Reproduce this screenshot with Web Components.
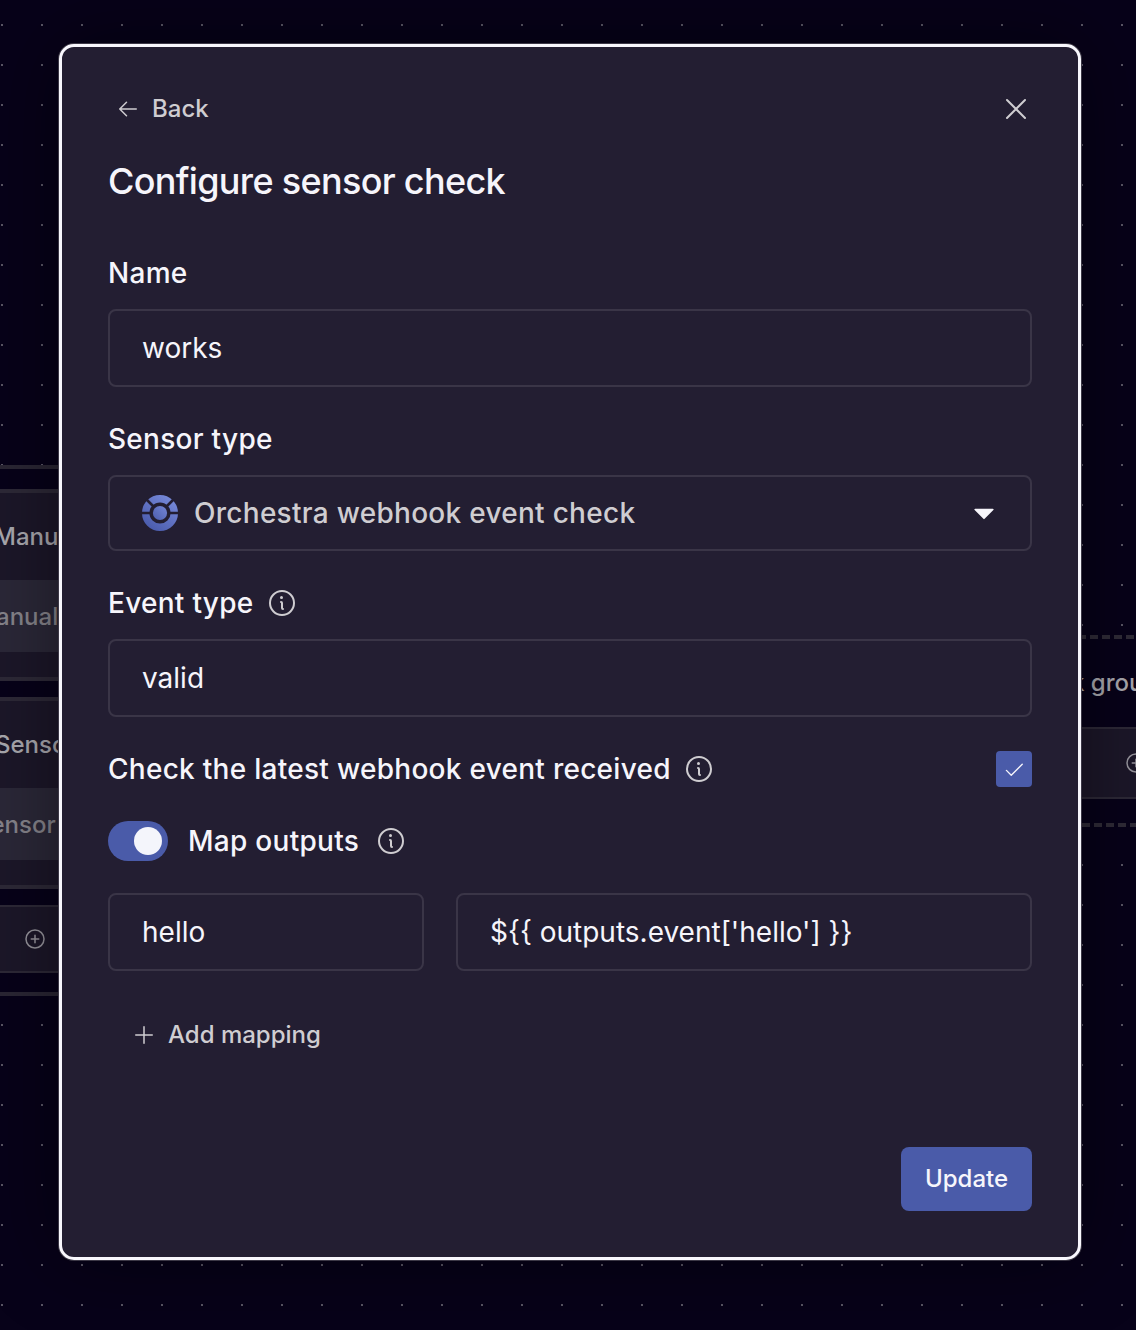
<!DOCTYPE html>
<html lang="en">
<head>
<meta charset="utf-8">
<title>Configure sensor check</title>
<style>
    :root {
        --bg: #070219;
        --panel: #231e32;
        --line: #3a3547;
        --text: #f6f5fb;
        --muted: #cfcdd1;
        --accent: #4a5ba9;
    }
    body {
        margin: 0;
        background: var(--bg);
        color: var(--text);
        font-family: Inter, "Liberation Sans", sans-serif;
    }
</style>
</head>
<body>
<sensor-page></sensor-page>

<script>
const ICONS = {
    back: '<path d="M216 128H40M112 56L40 128L112 200"/>',
    close: '<path d="M200 56L56 200M200 200L56 56"/>',
    plus: '<path d="M40 128H216M128 40V216"/>',
    check: '<path d="M40 144L96 200L224 72"/>',
    caret: '<path fill="currentColor" stroke="none" d="M213.66,101.66l-80,80a8,8,0,0,1-11.32,0l-80-80A8,8,0,0,1,48,88H208A8,8,0,0,1,213.66,101.66Z"/>',
    info: '<circle cx="128" cy="128" r="96"/><path d="M120 120a8 8 0 0 1 8 8v40a8 8 0 0 0 8 8"/><circle cx="124" cy="84" r="12" fill="currentColor" stroke="none"/>',
    pluscircle: '<circle cx="128" cy="128" r="96"/><path d="M88 128H168M128 88V168"/>'
}

function define(name, html) {
    const template = document.createElement('template')
    template.innerHTML = html
    customElements.define(name, class extends HTMLElement {
        constructor() {
            super()
            this.attachShadow({ mode: 'open' })
            this.shadowRoot.appendChild(template.content.cloneNode(true))
        }
    })
}

class UiIcon extends HTMLElement {
    constructor() {
        super()
        this.attachShadow({ mode: 'open' })
    }
    connectedCallback() {
        const size = this.getAttribute('size') || 24
        this.shadowRoot.innerHTML = `
            <style>
                :host { display: block; flex: none; }
                svg { display: block; }
            </style>
            <svg width="${size}" height="${size}" viewBox="0 0 256 256" fill="none" stroke="currentColor"
                stroke-width="16" stroke-linecap="round" stroke-linejoin="round">${ICONS[this.getAttribute('name')]}</svg>
        `
    }
}
customElements.define('ui-icon', UiIcon)

define('orchestra-logo', `
    <style>
        :host { display: block; flex: none; }
        svg { display: block; }
    </style>
    <svg width="36" height="36" viewBox="0 0 36 36">
        <defs>
            <linearGradient id="g" gradientUnits="userSpaceOnUse" x1="28" y1="4" x2="8" y2="32">
                <stop offset="0" stop-color="#7486d6"/>
                <stop offset="1" stop-color="#4c5dae"/>
            </linearGradient>
            <linearGradient id="c" x1="1" y1="0" x2="0" y2="1">
                <stop offset="0" stop-color="#7486d6"/>
                <stop offset="1" stop-color="#4c5dae"/>
            </linearGradient>
        </defs>
        <circle cx="18" cy="18" r="14.3" fill="none" stroke="url(#g)" stroke-width="7.4"/>
        <circle cx="18" cy="18" r="7.1" fill="url(#c)"/>
        <path d="M-1 18H8M28 18H37M11 11L4 4M25 11L32 4" stroke="#231e32" stroke-width="2.6"/>
    </svg>
`)

define('form-field', `
    <style>
        :host { display: flex; flex-direction: column; gap: 18px; }
    </style>
    <slot name="label"></slot>
    <slot></slot>
`)

define('field-label', `
    <style>
        :host {
            display: flex;
            align-items: center;
            gap: var(--gap, 12px);
            height: 36px;
            font-size: 28px;
            font-weight: 500;
            letter-spacing: 0.28px;
            white-space: nowrap;
        }
        ::slotted(ui-icon) { color: var(--muted); }
    </style>
    <slot></slot>
`)

define('text-box', `
    <style>
        :host {
            display: flex;
            align-items: center;
            box-sizing: border-box;
            height: 78px;
            padding: 0 32px;
            border: 2px solid var(--line);
            border-radius: 8px;
            font-size: 28px;
            white-space: nowrap;
        }
    </style>
    <slot></slot>
`)

define('select-box', `
    <style>
        :host {
            display: flex;
            align-items: center;
            gap: 16px;
            box-sizing: border-box;
            height: 76px;
            padding: 0 32px;
            border: 2px solid var(--line);
            border-radius: 8px;
            color: var(--muted);
            font-size: 28px;
            font-weight: 500;
            letter-spacing: 0.28px;
            white-space: nowrap;
        }
        span { flex: 1; }
        ui-icon { color: var(--text); }
    </style>
    <slot name="icon"></slot>
    <span><slot></slot></span>
    <ui-icon name="caret" size="28"></ui-icon>
`)

define('check-box', `
    <style>
        :host {
            display: grid;
            place-items: center;
            width: 36px;
            height: 36px;
            border-radius: 4px;
            background: var(--accent);
        }
    </style>
    <ui-icon name="check" size="22"></ui-icon>
`)

define('toggle-switch', `
    <style>
        :host {
            display: flex;
            align-items: center;
            justify-content: flex-end;
            box-sizing: border-box;
            width: 60px;
            height: 40px;
            padding: 6px;
            border-radius: 20px;
            background: var(--accent);
        }
        i { width: 28px; height: 28px; border-radius: 50%; background: #f4f5fb; }
    </style>
    <i></i>
`)

define('text-button', `
    <style>
        :host {
            display: flex;
            align-items: center;
            gap: 12px;
            color: var(--muted);
            font-size: 24px;
            font-weight: 500;
            white-space: nowrap;
        }
        :host([primary]) {
            justify-content: center;
            width: 131px;
            height: 64px;
            border-radius: 8px;
            background: var(--accent);
            color: var(--text);
        }
        span { padding-bottom: 2px; }
    </style>
    <slot name="icon"></slot>
    <span><slot></slot></span>
`)

define('config-dialog', `
    <style>
        :host {
            display: flex;
            flex-direction: column;
            box-sizing: border-box;
            padding: 42px 46px 46px;
            border: 3px solid #f8f7fd;
            border-radius: 15px;
            background: var(--panel);
            box-shadow: 0 0 0 1px #3c3846, 0 0 80px rgba(0, 0, 0, .45);
        }
        header { display: flex; align-items: center; justify-content: space-between; height: 40px; padding-left: 8px; }
        header ui-icon { color: var(--muted); }
        h1 { margin: 30px 0 52px; font-size: 36px; line-height: 44px; font-weight: 500; letter-spacing: -0.68px; }
        main { display: flex; flex-direction: column; gap: 34px; }
        footer { display: flex; justify-content: flex-end; margin-top: auto; }
    </style>
    <header>
        <text-button><ui-icon slot="icon" name="back"></ui-icon>Back</text-button>
        <ui-icon name="close" size="32"></ui-icon>
    </header>
    <h1><slot name="title"></slot></h1>
    <main><slot></slot></main>
    <footer><slot name="action"></slot></footer>
`)

define('sensor-form', `
    <style>
        :host { display: flex; flex-direction: column; gap: 34px; }
        .row { display: flex; align-items: center; justify-content: space-between; }
        .map { display: flex; align-items: center; gap: 20px; }
        .map field-label { --gap: 16px; }
        .pair { display: grid; grid-template-columns: 316px 1fr; gap: 32px; margin-top: -2px; }
        .add { height: 48px; margin-top: 6px; padding-left: 24px; }
    </style>
    <form-field>
        <field-label slot="label">Name</field-label>
        <text-box>works</text-box>
    </form-field>
    <form-field>
        <field-label slot="label">Sensor type</field-label>
        <select-box><orchestra-logo slot="icon"></orchestra-logo>Orchestra webhook event check</select-box>
    </form-field>
    <form-field>
        <field-label slot="label">Event type<ui-icon name="info" size="32"></ui-icon></field-label>
        <text-box>valid</text-box>
    </form-field>
    <div class="row">
        <field-label>Check the latest webhook event received<ui-icon name="info" size="32"></ui-icon></field-label>
        <check-box></check-box>
    </div>
    <div class="map">
        <toggle-switch></toggle-switch>
        <field-label>Map outputs<ui-icon name="info" size="32"></ui-icon></field-label>
    </div>
    <div class="pair">
        <text-box>hello</text-box>
        <text-box>\${{ outputs.event['hello'] }}</text-box>
    </div>
    <text-button class="add"><ui-icon slot="icon" name="plus"></ui-icon>Add mapping</text-button>
`)

// task card on the canvas: title, then a highlighted row
define('flow-card', `
    <style>
        :host {
            display: block;
            box-sizing: border-box;
            height: 192px;
            border: solid #2d2937;
            border-width: 4px 0;
            background: #1c1729;
            font-size: 24px;
            font-weight: 500;
            white-space: nowrap;
        }
        .title { height: 87px; line-height: 87px; color: #a9a8ae; }
        .row { height: 72px; line-height: 74px; background: #2b2838; color: #86848b; }
        ::slotted(*) { display: block; margin-left: var(--shift, 0); }
    </style>
    <div class="title"><slot name="title"></slot></div>
    <div class="row"><slot></slot></div>
`)

define('flow-add', `
    <style>
        :host {
            display: flex;
            align-items: center;
            box-sizing: border-box;
            border: solid #2d2937;
            border-width: 2px 0;
            background: #1c1729;
            color: #96949c;
        }
    </style>
    <ui-icon name="pluscircle"></ui-icon>
`)

define('flow-canvas', `
    <style>
        :host {
            display: block;
            position: relative;
            overflow: hidden;
            background: url("data:image/svg+xml,%3Csvg xmlns='http://www.w3.org/2000/svg' width='40' height='40'%3E%3Crect x='1' y='24' width='2' height='2' fill='%235a5665'/%3E%3C/svg%3E") var(--bg);
        }
        .left {
            position: absolute;
            left: 0;
            top: 465px;
            display: flex;
            flex-direction: column;
            gap: 16px;
            box-sizing: border-box;
            width: 90px;
            height: 531px;
            padding-top: 20px;
            border: solid #2a2634;
            border-width: 4px 0;
            background: var(--bg);
        }
        .left flow-add { height: 68px; padding-left: 23px; }
        .right {
            position: absolute;
            left: 1066px;
            top: 635px;
            width: 90px;
            height: 192px;
            background:
                repeating-linear-gradient(90deg, #2f2b37 0 8px, transparent 8px 12px) 0 0 / 100% 4px no-repeat,
                repeating-linear-gradient(90deg, #2f2b37 0 8px, transparent 8px 12px) 4px 100% / 100% 4px no-repeat,
                var(--bg);
        }
        .right p {
            margin: 0 0 0 5px;
            height: 92px;
            line-height: 96px;
            color: #a9a8ae;
            font-size: 24px;
            font-weight: 500;
            white-space: nowrap;
        }
        .right flow-add { height: 72px; padding-left: 58px; }
    </style>
    <div class="left">
        <flow-card><span slot="title" style="--shift: -6px">Manu</span><span style="--shift: -4px">anual</span></flow-card>
        <flow-card><span slot="title" style="--shift: -5px">Senso</span><span style="--shift: -9.5px">ensor</span></flow-card>
        <flow-add></flow-add>
    </div>
    <div class="right">
        <p>k grou</p>
        <flow-add></flow-add>
    </div>
`)

define('sensor-page', `
    <style>
        :host { display: grid; grid-template: 1330px / 1136px; overflow: hidden; }
        flow-canvas, config-dialog { grid-area: 1 / 1; }
        config-dialog { margin: 44px 55px 70px 59px; z-index: 1; }
    </style>
    <flow-canvas></flow-canvas>
    <config-dialog>
        <span slot="title">Configure sensor check</span>
        <sensor-form></sensor-form>
        <text-button slot="action" primary>Update</text-button>
    </config-dialog>
`)
</script>
</body>
</html>
